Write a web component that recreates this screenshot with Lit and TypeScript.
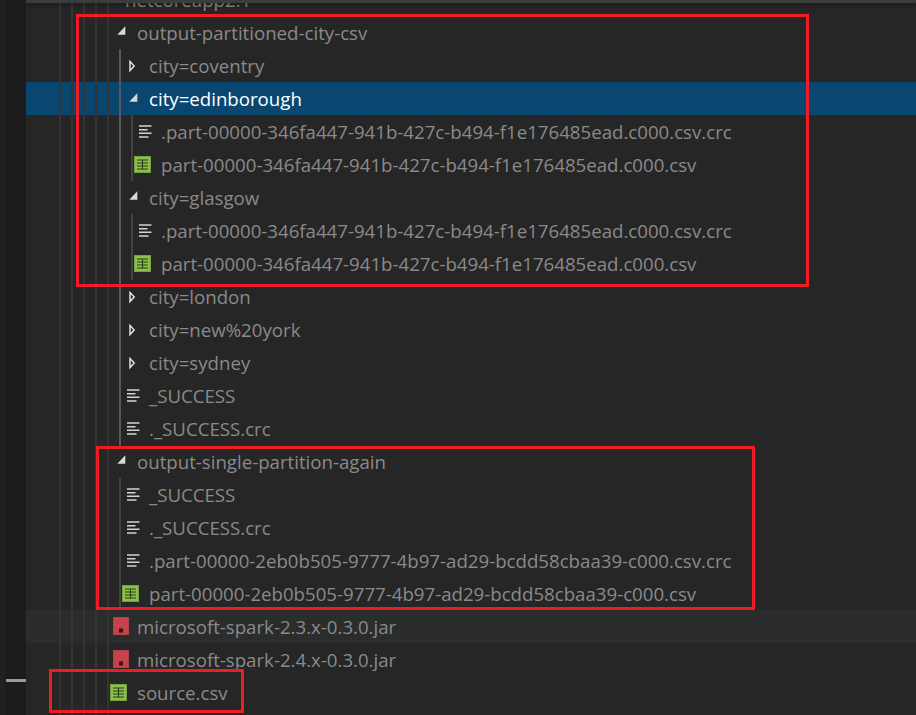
import {LitElement, css, html, svg} from 'lit';
import {customElement} from 'lit/decorators.js';

type Kind = 'open' | 'closed' | 'lines' | 'csv' | 'jar' | 'none';

interface TreeRow {
  label: string;
  depth: number;
  kind: Kind;
  selected?: boolean;
  hovered?: boolean;
}

const PART_A = 'part-00000-346fa447-941b-427c-b494-f1e176485ead.c000.csv';
const PART_B = 'part-00000-2eb0b505-9777-4b97-ad29-bcdd58cbaa39-c000.csv';

const ROWS: TreeRow[] = [
  {label: 'netcoreapp2.1', depth: -1, kind: 'none'},
  {label: 'output-partitioned-city-csv', depth: 0, kind: 'open'},
  {label: 'city=coventry', depth: 1, kind: 'closed'},
  {label: 'city=edinborough', depth: 1, kind: 'open', selected: true},
  {label: '.' + PART_A + '.crc', depth: 2, kind: 'lines'},
  {label: PART_A, depth: 2, kind: 'csv'},
  {label: 'city=glasgow', depth: 1, kind: 'open'},
  {label: '.' + PART_A + '.crc', depth: 2, kind: 'lines'},
  {label: PART_A, depth: 2, kind: 'csv'},
  {label: 'city=london', depth: 1, kind: 'closed'},
  {label: 'city=new%20york', depth: 1, kind: 'closed'},
  {label: 'city=sydney', depth: 1, kind: 'closed'},
  {label: '_SUCCESS', depth: 1, kind: 'lines'},
  {label: '._SUCCESS.crc', depth: 1, kind: 'lines'},
  {label: 'output-single-partition-again', depth: 0, kind: 'open'},
  {label: '_SUCCESS', depth: 1, kind: 'lines'},
  {label: '._SUCCESS.crc', depth: 1, kind: 'lines'},
  {label: '.part-00000-2eb0b505-9777-4b97-ad29-bcdd58cbaa39-c000.csv.crc', depth: 1, kind: 'lines'},
  {label: PART_B, depth: 1, kind: 'csv'},
  {label: 'microsoft-spark-2.3.x-0.3.0.jar', depth: 0, kind: 'jar', hovered: true},
  {label: 'microsoft-spark-2.4.x-0.3.0.jar', depth: 0, kind: 'jar'},
  {label: 'source.csv', depth: 0, kind: 'csv'},
];

const GUIDES = [
  {x: 59, top: 3, height: 712, cls: ''},
  {x: 71, top: 3, height: 712, cls: ''},
  {x: 83, top: 3, height: 712, cls: ''},
  {x: 95, top: 3, height: 712, cls: ''},
  {x: 107, top: 3, height: 712, cls: ''},
  {x: 119, top: 49, height: 397, cls: 'bright'},
  {x: 119, top: 478, height: 132, cls: 'mid'},
  {x: 131, top: 115, height: 66, cls: 'mid'},
  {x: 131, top: 214, height: 66, cls: 'mid'},
];

const MARKS = [
  {x: 76, y: 14, w: 733, h: 273},
  {x: 96, y: 446, w: 659, h: 164},
  {x: 49, y: 669, w: 195, h: 44},
];

@customElement('app-root')
export class AppRoot extends LitElement {
  static styles = css`
    :host {
      display: flex;
      position: relative;
      width: 916px;
      height: 715px;
      overflow: hidden;
      background: #262626;
      font-family: 'Open Sans', 'Noto Sans', sans-serif;
    }
    .strip {
      position: relative;
      flex: none;
      width: 26px;
      background: #1c1c1c;
      border-left: 5px solid #212121;
      box-sizing: border-box;
    }
    .strip i {
      position: absolute;
      left: 1px;
      right: 0;
      top: 679px;
      height: 3px;
      background: #9a9a9a;
    }
    .pane {
      position: relative;
      flex: 1;
      min-width: 0;
    }
    .top {
      position: relative;
      z-index: 2;
      height: 3px;
      background: #3c3c3c;
      box-shadow: 0 2px 4px #00000066;
    }
    .tree {
      position: relative;
      margin-top: -20px;
    }
    .row {
      display: flex;
      align-items: center;
      height: 33px;
      color: #8a8a8a;
      font-size: 18.67px;
      white-space: nowrap;
    }
    .row.selected {
      background: #094771;
      color: #fff;
      font-weight: 500;
    }
    .row.hovered {
      background: rgba(90, 110, 110, 0.1);
    }
    .twist {
      flex: none;
      width: 15px;
      height: 33px;
      margin-left: -20px;
      margin-right: 5px;
    }
    .icon {
      flex: none;
      width: 24px;
      height: 33px;
      margin-left: -27px;
      margin-right: 3px;
    }
    .guide {
      position: absolute;
      width: 2px;
      background: #343434;
    }
    .guide.mid {
      background: #424242;
    }
    .guide.bright {
      background: #585858;
    }
    .mark {
      position: absolute;
      z-index: 3;
      box-sizing: border-box;
      border: 3px solid #ee1c25;
    }
  `;

  icon_(kind: Kind, selected?: boolean) {
    switch (kind) {
      case 'open':
        return html`<svg class="twist" viewBox="0 0 15 33"><path d="${selected ? 'M0.3 19.7h8v-8.4z' : 'M0.3 18.7h8v-8.4z'}" fill="#d8d8d8"/></svg>`;
      case 'closed':
        return html`<svg class="twist" viewBox="0 0 15 33"><path d="M1 12.5l4.2 4.4-4.2 4.6z" fill="#262626" stroke="#e0e0e0" stroke-width="1.5"/></svg>`;
      case 'lines':
        return html`<svg class="icon" viewBox="0 0 24 33">
          ${svg`<path d="M5 11h12.5M5 14.7h8.5M5 18.3h12.5M5 22h9.5" stroke="#d4d4d4" stroke-width="1.5"/>`}
        </svg>`;
      case 'csv':
        return html`<svg class="icon" viewBox="0 0 24 33">
          ${svg`<rect x="0.5" y="8.5" width="16" height="16" fill="#8cc04b" stroke="#76a03f"/>
          <path d="M3 12h11M3 15h11M3 18h11M3 21h11" stroke="#2a3a18" stroke-width="1.2"/>
          <path d="M8.5 12v9.5" stroke="#2a3a18" stroke-width="1"/>`}
        </svg>`;
      case 'jar':
        return html`<svg class="icon" viewBox="0 0 24 33">
          ${svg`<rect x="3.5" y="7.5" width="15" height="17" fill="#c8414b" stroke="#a8454d"/>
          <rect x="9" y="19" width="4" height="3.5" fill="#3a1216"/>
          <path d="M9.7 19v-.6h2.6v.6" fill="none" stroke="#6a2a30"/>`}
        </svg>`;
      default:
        return html``;
    }
  }

  render() {
    return html`
      <div class="strip"><i></i></div>
      <div class="pane">
        <div class="top"></div>
        <div class="tree">
          ${ROWS.map(row => html`
            <div class="row ${row.selected ? 'selected' : ''} ${row.hovered ? 'hovered' : ''}" style="padding-left: ${111 + row.depth * 12}px">
              ${this.icon_(row.kind, row.selected)}<span>${row.label}</span>
            </div>
          `)}
        </div>
      </div>
      ${GUIDES.map(g => html`<div class="guide ${g.cls}" style="left: ${g.x}px; top: ${g.top}px; height: ${g.height}px"></div>`)}
      ${MARKS.map(m => html`<div class="mark" style="left: ${m.x}px; top: ${m.y}px; width: ${m.w}px; height: ${m.h}px"></div>`)}
    `;
  }
}
